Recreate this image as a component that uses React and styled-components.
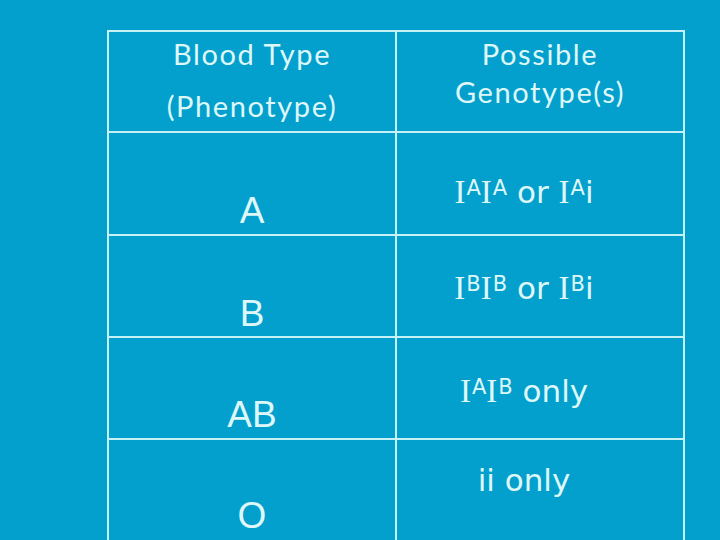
import styled, { createGlobalStyle } from 'styled-components';

const BLUE = '#04a0cd';
const LINE = '#c6f1f6';
const INK = '#def8fa';

const GlobalStyle = createGlobalStyle`
  html, body {
    margin: 0;
    background: ${BLUE};
  }
`;

const Page = styled.div`
  height: 540px;
  overflow: hidden;
  box-sizing: border-box;
  padding: 30px 0 0 107px;
  background: ${BLUE};
`;

const Grid = styled.div`
  display: grid;
  grid-template-columns: 286px 286px;
  grid-template-rows: 99px 101px 100px 100px 100px;
  gap: 2px;
  padding: 2px;
  width: fit-content;
  background: ${LINE};
`;

const HeadCell = styled.div`
  background: ${BLUE};
  display: flex;
  flex-direction: column;
  align-items: center;
  gap: ${(p) => p.$gap}px;
  padding-top: 4px;
  font-family: Lato, "Open Sans", sans-serif;
  font-size: 29px;
  font-weight: 400;
  line-height: 35px;
  letter-spacing: 1.6px;
  color: ${INK};
`;

const TypeCell = styled.div`
  background: ${BLUE};
  padding-top: ${(p) => p.$top}px;
  text-align: center;
  font-family: "Liberation Sans", Arial, sans-serif;
  font-size: 37px;
  line-height: 37px;
  color: ${INK};
`;

const GenoCell = styled.div`
  background: ${BLUE};
  padding: ${(p) => p.$top}px 32px 0 0;
  text-align: center;
  font-family: "DejaVu Sans", Verdana, sans-serif;
  font-size: 31px;
  line-height: 30px;
  color: ${INK};
  white-space: nowrap;
`;

const Allele = styled.span`
  font-family: "Liberation Serif", serif;
  font-size: 33px;
  line-height: 0;
  margin-right: 1px;
`;

const Sup = styled.span`
  font-size: 21px;
  line-height: 0;
  vertical-align: 8px;
`;

const Gene = ({ sup }) => (
  <>
    <Allele>I</Allele>
    <Sup>{sup}</Sup>
  </>
);

const rows = [
  {
    type: 'A',
    typeTop: 59,
    genoTop: 44,
    geno: (
      <>
        <Gene sup="A" />
        <Gene sup="A" /> or <Gene sup="A" />i
      </>
    ),
  },
  {
    type: 'B',
    typeTop: 59,
    genoTop: 37,
    geno: (
      <>
        <Gene sup="B" />
        <Gene sup="B" /> or <Gene sup="B" />i
      </>
    ),
  },
  {
    type: 'AB',
    typeTop: 58,
    genoTop: 38,
    geno: (
      <>
        <Gene sup="A" />
        <Gene sup="B" /> only
      </>
    ),
  },
  { type: 'O', typeTop: 57, genoTop: 25, geno: 'ii only' },
];

export default function App() {
  return (
    <>
      <GlobalStyle />
      <Page>
        <Grid>
          <HeadCell $gap={17}>
            <span>Blood Type</span>
            <span>(Phenotype)</span>
          </HeadCell>
          <HeadCell $gap={3}>
            <span>Possible</span>
            <span>Genotype(s)</span>
          </HeadCell>
          {rows.map((r) => (
            <>
              <TypeCell key={r.type + 't'} $top={r.typeTop}>
                {r.type}
              </TypeCell>
              <GenoCell key={r.type + 'g'} $top={r.genoTop}>
                {r.geno}
              </GenoCell>
            </>
          ))}
        </Grid>
      </Page>
    </>
  );
}
